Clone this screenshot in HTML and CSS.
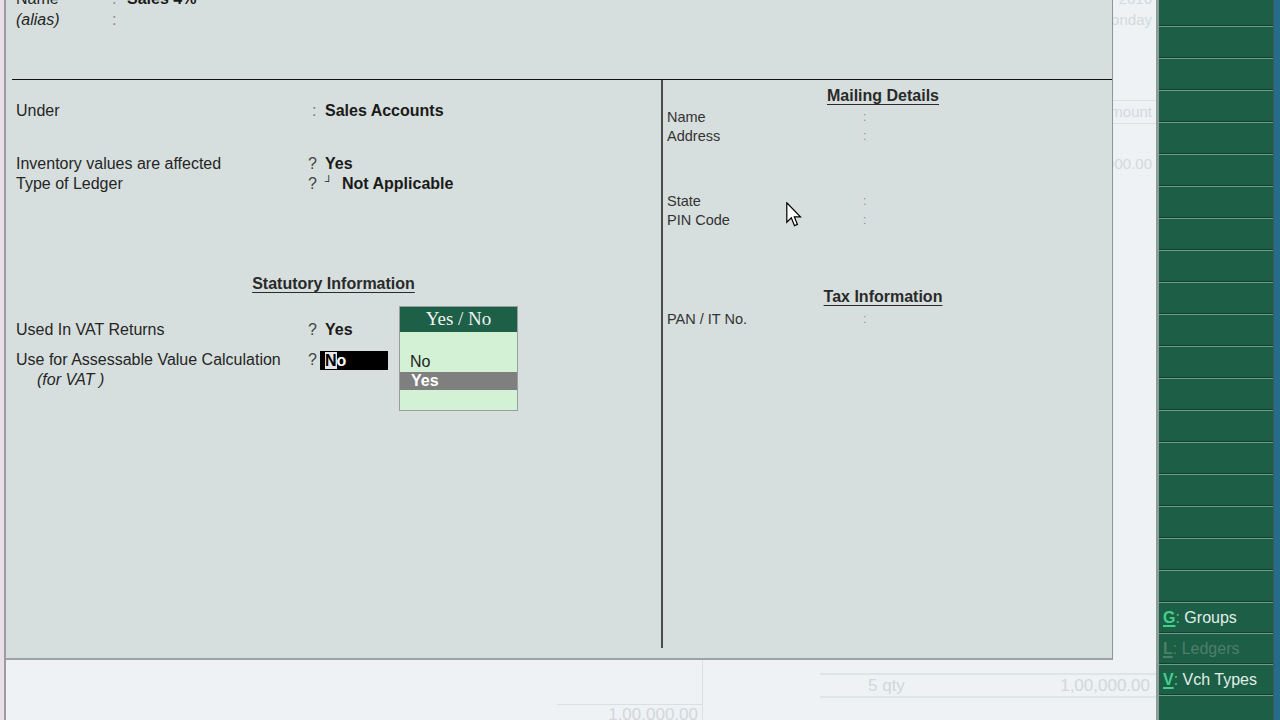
FILE: index.html
```html
<!DOCTYPE html>
<html>
<head>
<meta charset="utf-8">
<title>Ledger Alteration</title>
<link rel="stylesheet" href="styles.css">
</head>
<body>
<div class="edge"></div>
<div class="workspace">
  <div class="top-row">
    <div class="panel">
      <div class="header">
        <div class="hrow"><span class="hlabel">Name</span><span class="hcolon">:</span><span class="hval">Sales 4%</span></div>
        <div class="hrow"><span class="hlabel alias">(alias)</span><span class="hcolon">:</span></div>
      </div>
      <div class="columns">
        <div class="col-left">
          <div class="row"><span class="lbl">Under</span><span class="mk colon">:</span><span class="val">Sales Accounts</span></div>
          <div class="row gap33"><span class="lbl">Inventory values are affected</span><span class="mk">?</span><span class="val">Yes</span></div>
          <div class="row"><span class="lbl">Type of Ledger</span><span class="mk">?</span><span class="corner">┘</span><span class="val">Not Applicable</span></div>
          <div class="section-head gap80"><span>Statutory Information</span></div>
          <div class="row gap26"><span class="lbl">Used In VAT Returns</span><span class="mk">?</span><span class="val">Yes</span></div>
          <div class="row gap10"><span class="lbl">Use for Assessable Value Calculation</span><span class="mk short">?</span><span class="field"><span class="caret">N</span>o</span></div>
          <div class="row sub"><span class="lbl">(for VAT )</span></div>
        </div>
        <div class="divider"></div>
        <div class="col-right">
          <div class="rhead"><span>Mailing Details</span></div>
          <div class="rrow gap2"><span class="rl">Name</span><span class="rc">:</span></div>
          <div class="rrow"><span class="rl">Address</span><span class="rc">:</span></div>
          <div class="rrow gap46"><span class="rl">State</span><span class="rc">:</span></div>
          <div class="rrow"><span class="rl">PIN Code</span><span class="rc">:</span></div>
          <div class="rhead gap57"><span>Tax Information</span></div>
          <div class="rrow gap3"><span class="rl">PAN / IT No.</span><span class="rc">:</span></div>
        </div>
      </div>
      <div class="popup">
        <div class="popup-title">Yes / No</div>
        <div class="popup-body">
          <div class="opt">No</div>
          <div class="opt sel">Yes</div>
        </div>
      </div>
      <svg class="cursor" width="16" height="25" viewBox="0 0 13 20.5">
        <path d="M0.6 0.6 L0.6 16.6 L4.3 13 L6.9 19.4 L9.3 18.4 L6.8 12.2 L11.8 12.2 Z" fill="#ffffff" stroke="#000000" stroke-width="1" stroke-linejoin="miter"/>
      </svg>
    </div>
    <div class="strip">
      <div class="sline s1">2016</div>
      <div class="sline s2">Monday</div>
      <div class="srule"><div class="sline">Amount</div></div>
      <div class="sline s3">1,00,000.00</div>
    </div>
  </div>
  <div class="bottom-row">
    <div class="bl"><div class="btotal">1,00,000.00</div></div>
    <div class="br">
      <div class="bqty"><span class="qty">5 qty</span><span class="amt">1,00,000.00</span></div>
    </div>
  </div>
</div>
<div class="sidebar">
  <div class="btns">
    <div class="btn first"></div>
    <div class="btn"></div><div class="btn"></div><div class="btn"></div>
    <div class="btn"></div><div class="btn"></div><div class="btn"></div>
    <div class="btn"></div><div class="btn"></div><div class="btn"></div>
    <div class="btn"></div><div class="btn"></div><div class="btn"></div>
    <div class="btn"></div><div class="btn"></div><div class="btn"></div>
    <div class="btn"></div><div class="btn"></div><div class="btn"></div>
    <div class="btn b31"><span class="key">G</span><span class="kc">:</span> Groups</div>
    <div class="btn b31 off"><span class="key">L</span>: Ledgers</div>
    <div class="btn b31"><span class="key">V</span><span class="kc">:</span> Vch Types</div>
    <div class="btn"></div>
  </div>
  <div class="blue"></div>
</div>
</body>
</html>
```
FILE: styles.css
```css
* { box-sizing: border-box; margin: 0; padding: 0; }
html, body { width: 1280px; height: 720px; overflow: hidden; }
body {
  display: flex;
  background: #eef2f5;
  font-family: "Liberation Sans", Arial, sans-serif;
  color: #252525;
}

.edge { width: 6px; height: 720px; flex: none; background: #eadfe6; border-right: 2px solid #9a9c9e; }

.workspace { width: 1150px; flex: none; display: flex; flex-direction: column; }
.top-row { display: flex; height: 660px; }

.panel {
  width: 1107px;
  height: 660px;
  position: relative;
  background: #d6dfdd;
  border-right: 1px solid #8d9694;
  border-bottom: 2px solid #9ca3a2;
  overflow: hidden;
}

.header { margin: -12px 0 0 6px; height: 92px; border-bottom: 1px solid #111; padding-left: 4px; }
.hrow { display: flex; height: 21px; line-height: 21px; font-size: 16px; }
.hlabel { width: 96px; }
.hcolon { width: 15px; color: #888; }
.hval { font-weight: bold; color: #1a1a1a; }
.alias { font-style: italic; }

.columns { display: flex; height: 568px; }
.col-left { width: 655px; padding-top: 21px; }
.divider { width: 2px; background: #4a4d4d; }
.col-right { flex: 1; padding: 6px 13px 0 4px; }

.row { display: flex; height: 20px; line-height: 20px; font-size: 16px; padding-left: 10px; }
.lbl { width: 292px; flex: none; }
.mk { width: 17px; flex: none; color: #444; }
.mk.colon { padding-left: 4px; color: #777; }
.mk.short { width: 12px; }
.val { font-weight: bold; color: #1a1a1a; }
.corner { font-size: 11px; line-height: 14px; width: 17px; flex: none; color: #222; }
.field {
  width: 68px;
  height: 19px;
  line-height: 19px;
  margin-top: 1px;
  background: #000;
  color: #fff;
  font-weight: bold;
  padding-left: 5px;
}
.caret { background: #e6e6e6; color: #000; }
.row.sub { padding-left: 31px; font-style: italic; }

.section-head {
  height: 20px;
  line-height: 20px;
  font-size: 16px;
  font-weight: bold;
  text-align: center;
  color: #2a2a2a;
}
.section-head span, .rhead span { text-decoration: underline; text-underline-offset: 3px; }

.gap2 { margin-top: 2px; }
.gap3 { margin-top: 3px; }
.gap10 { margin-top: 10px; }
.gap26 { margin-top: 26px; }
.gap33 { margin-top: 33px; }
.gap46 { margin-top: 46px; }
.gap57 { margin-top: 57px; }
.gap80 { margin-top: 80px; }

.rhead { height: 20px; line-height: 20px; font-size: 16px; font-weight: bold; text-align: center; color: #2a2a2a; }
.rrow { display: flex; height: 19px; line-height: 19px; font-size: 14.5px; color: #333; }
.rl { width: 197px; flex: none; }
.rc { color: #8e8e8e; font-size: 12px; margin-left: -1px; }

.popup {
  position: absolute;
  left: 393px;
  top: 306px;
  width: 119px;
  height: 105px;
  border: 1px solid #9a9e9c;
  background: #d3f1d5;
  display: flex;
  flex-direction: column;
}
.popup-title {
  height: 25px;
  line-height: 24px;
  background: #1e5f48;
  color: #eef4ef;
  font-family: "Liberation Serif", "Times New Roman", serif;
  font-size: 19px;
  text-align: center;
}
.popup-body { padding-top: 20px; }
.opt { height: 20px; line-height: 20px; font-size: 16px; padding-left: 10px; color: #222; }
.opt.sel { height: 18px; line-height: 18px; background: #7f7f7f; color: #fff; font-weight: bold; padding-left: 11px; }

.cursor { position: absolute; left: 780px; top: 202px; }

.strip { width: 43px; height: 660px; overflow: hidden; color: #d4d9dd; font-size: 15px; }
.sline { display: flex; justify-content: flex-end; white-space: nowrap; padding-right: 4px; height: 20px; line-height: 20px; }
.s1 { margin-top: -11px; }
.s2 { margin-top: 1px; }
.srule { margin-top: 70px; height: 24px; border-top: 1px solid #dce1e4; border-bottom: 1px solid #dce1e4; }
.srule .sline { height: 22px; line-height: 22px; }
.s3 { margin-top: 30px; }

.bottom-row { display: flex; height: 60px; color: #d2d7db; font-size: 17px; }
.bl { width: 697px; flex: none; border-right: 1px solid #dadfe3; display: flex; flex-direction: column; align-items: flex-end; justify-content: flex-end; }
.btotal { width: 145px; height: 16px; line-height: 20px; overflow: hidden; border-top: 1px solid #dadfe3; text-align: right; padding-right: 4px; }
.br { flex: 1; padding: 13px 0 0 117px; }
.bqty { height: 25px; display: flex; border-top: 2px solid #dfe4e7; border-bottom: 2px solid #dfe4e7; line-height: 21px; }
.qty { flex: 1; padding-left: 48px; }
.amt { padding-right: 6px; }

.sidebar { width: 124px; flex: none; display: flex; border-left: 3px solid #8e9c98; }
.btns { width: 114px; flex: none; display: flex; flex-direction: column; background: #1c5e46; }
.btn {
  height: 32px;
  flex: none;
  background: #1c5e46;
  border-top: 1px solid #6a9d8b;
  border-bottom: 1px solid #12412f;
  color: #e2eee8;
  font-size: 16px;
  line-height: 29px;
  padding-left: 4px;
  white-space: nowrap;
}
.btn.first { height: 26px; border-top: none; }
.btn.b31 { height: 31px; }
.key {
  color: #44d08c;
  font-weight: bold;
  text-decoration: underline;
  text-decoration-thickness: 2px;
  text-underline-offset: 2px;
}
.kc { color: #44d08c; }
.btn.off { color: #4f7f69; }
.btn.off .key { color: #4f7f69; }
.blue { width: 7px; flex: none; background: #276b8a; border-left: 1px solid #3e5a51; }
```
